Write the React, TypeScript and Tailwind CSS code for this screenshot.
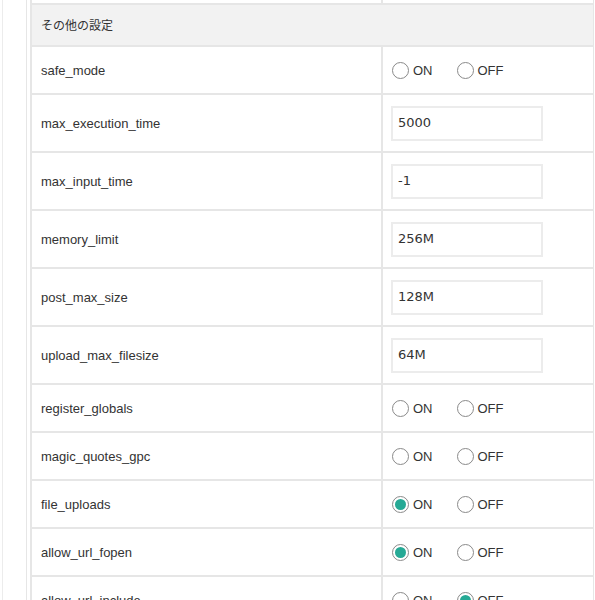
import React from "react";

type Row =
  | { name: string; kind: "text"; value: string }
  | { name: string; kind: "radio"; on: boolean | null };

const rows: Row[] = [
  { name: "safe_mode", kind: "radio", on: null },
  { name: "max_execution_time", kind: "text", value: "5000" },
  { name: "max_input_time", kind: "text", value: "-1" },
  { name: "memory_limit", kind: "text", value: "256M" },
  { name: "post_max_size", kind: "text", value: "128M" },
  { name: "upload_max_filesize", kind: "text", value: "64M" },
  { name: "register_globals", kind: "radio", on: null },
  { name: "magic_quotes_gpc", kind: "radio", on: null },
  { name: "file_uploads", kind: "radio", on: true },
  { name: "allow_url_fopen", kind: "radio", on: true },
  { name: "allow_url_include", kind: "radio", on: false },
];

function Radio({ checked, label }: { checked: boolean; label: string }) {
  return (
    <label className="flex items-center gap-[4px]">
      <span className="flex h-[17px] w-[17px] items-center justify-center rounded-full border border-[#8a8a8a] bg-white">
        {checked && <span className="h-[11px] w-[11px] rounded-full bg-[#26a995]" />}
      </span>
      <span className="pt-[1px] text-[13px] leading-none text-[#333]">{label}</span>
    </label>
  );
}

function SettingRow({ row }: { row: Row }) {
  const tall = row.kind === "text";
  return (
    <div
      className={`grid grid-cols-[351px_1fr] border-b-2 border-[#e6e6e6] ${
        tall ? "h-[58px]" : "h-[48px]"
      }`}
    >
      <div className="flex items-center border-r-2 border-[#e6e6e6] pl-[9px] pt-[2px] text-[13px] text-[#333]">
        {row.name}
      </div>
      <div className="flex items-center pl-[8px]">
        {row.kind === "text" ? (
          <div className="flex h-[35px] w-[152px] items-center border-2 border-[#ececec] pl-[5px] font-['DejaVu_Sans',sans-serif] text-[13px] text-[#333]">
            {row.value}
          </div>
        ) : (
          <div className="ml-[1px] flex items-center gap-[24px]">
            <Radio checked={row.on === true} label="ON" />
            <Radio checked={row.on === false} label="OFF" />
          </div>
        )}
      </div>
    </div>
  );
}

export default function App() {
  return (
    <div className="flex h-[600px] w-[595px] overflow-hidden bg-white font-['Liberation_Sans',Arial,sans-serif]">
      {/* left gutter */}
      <div className="ml-[2px] w-[24px] border-l border-[#ececec]" />
      <div className="w-[4px] border-l border-[#e6e6e6]" />

      {/* settings table */}
      <div className="flex w-[564px] flex-col border-l-2 border-r border-[#e6e6e6]">
        <div className="grid h-[3px] shrink-0 grid-cols-[351px_1fr]">
          <div className="border-r-2 border-[#e6e6e6]" />
          <div />
        </div>
        <div className="flex h-[44px] shrink-0 items-center border-y-2 border-[#e6e6e6] bg-[#f2f2f2] pl-[9px] font-['Noto_Sans_CJK_JP',sans-serif] text-[12px] text-[#333]">
          その他の設定
        </div>
        {rows.map((r) => (
          <div key={r.name} className="shrink-0">
            <SettingRow row={r} />
          </div>
        ))}
      </div>
    </div>
  );
}
